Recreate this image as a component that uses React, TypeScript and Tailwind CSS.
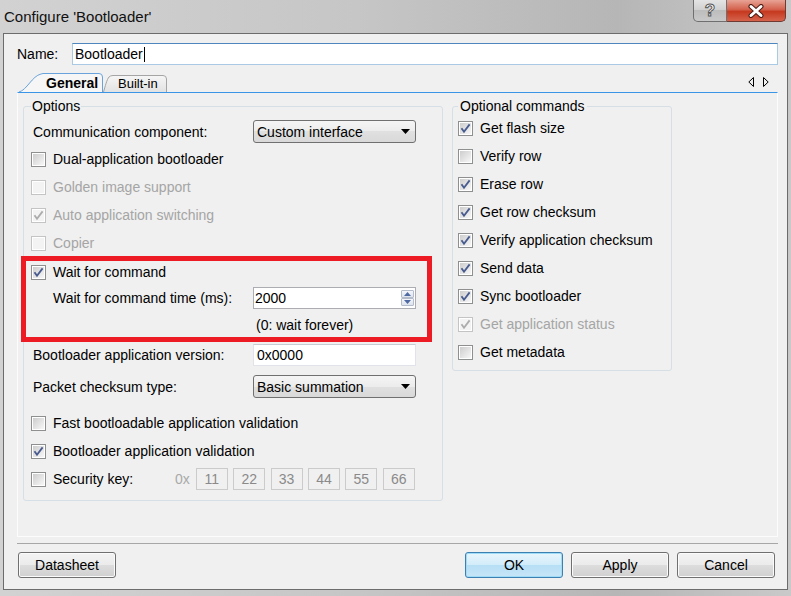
import React from "react";

function CheckBox({ checked = false, disabled = false }: { checked?: boolean; disabled?: boolean }) {
  return (
    <span
      className={`flex h-[15px] w-[15px] shrink-0 items-center justify-center border bg-white ${
        disabled ? "border-[#c4c4c4]" : "border-[#8e8f8f]"
      }`}
    >
      <span
        className={`flex h-[11px] w-[11px] items-center justify-center ${
          disabled ? "bg-[#f3f3f3]" : "bg-[linear-gradient(135deg,#cdcdcd,#f7f7f7)]"
        }`}
      >
        {checked && (
          <svg width="11" height="11" viewBox="0 0 11 11">
            <path
              d="M1.5 5.2 L4 8.8 L9.6 1.4"
              fill="none"
              stroke={disabled ? "#acacac" : "#485b8f"}
              strokeWidth="1.8"
            />
          </svg>
        )}
      </span>
    </span>
  );
}

function CheckRow({ label, checked, disabled }: { label: string; checked?: boolean; disabled?: boolean }) {
  return (
    <div className="flex h-[28px] items-center gap-[7px]">
      <CheckBox checked={checked} disabled={disabled} />
      <span className={disabled ? "text-[#a5a5a5]" : "text-black"}>{label}</span>
    </div>
  );
}

function Combo({ value }: { value: string }) {
  return (
    <div className="flex h-[23px] w-[163px] items-center justify-between rounded-[3px] border border-[#707070] bg-[linear-gradient(180deg,#f5f5f5,#ececec_50%,#e0e0e0_50%,#d9d9d9)] pl-[3px] pr-[5px]">
      <span>{value}</span>
      <svg width="9" height="5" viewBox="0 0 9 5">
        <path d="M0 0H9L4.5 5Z" fill="#000" />
      </svg>
    </div>
  );
}

function SpinBtn({ up }: { up?: boolean }) {
  return (
    <div className="flex h-[8px] w-[13px] items-center justify-center rounded-[1px] border border-[#b4bccb] bg-[linear-gradient(180deg,#f4f6fa,#dde3ee)]">
      <svg width="7" height="4" viewBox="0 0 7 4">
        <path d={up ? "M0 4H7L3.5 0Z" : "M0 0H7L3.5 4Z"} fill="#4f6aa3" />
      </svg>
    </div>
  );
}

function Btn({ label, primary }: { label: string; primary?: boolean }) {
  return (
    <div
      className={`flex h-[26px] w-[98px] items-center justify-center rounded-[3px] border ${
        primary
          ? "border-[#3c7fb1] bg-[linear-gradient(180deg,#e8f5fc,#d2ecfa_50%,#b5def5_50%,#c7e6f7)] shadow-[inset_0_0_0_1px_#9fdcf8]"
          : "border-[#707070] bg-[linear-gradient(180deg,#f3f3f3,#ebebeb_50%,#dddddd_50%,#d0d0d0)] shadow-[inset_0_0_0_1px_#fbfbfb]"
      }`}
    >
      {label}
    </div>
  );
}

const commands: { label: string; checked?: boolean; disabled?: boolean }[] = [
  { label: "Get flash size", checked: true },
  { label: "Verify row" },
  { label: "Erase row", checked: true },
  { label: "Get row checksum", checked: true },
  { label: "Verify application checksum", checked: true },
  { label: "Send data", checked: true },
  { label: "Sync bootloader", checked: true },
  { label: "Get application status", checked: true, disabled: true },
  { label: "Get metadata" },
];

export default function App() {
  return (
    <div className="h-[596px] w-[791px] overflow-hidden bg-[linear-gradient(90deg,#d2d2d2,#c6c6c6_45%,#b6b6b6_78%,#c9c9c9)] font-['Liberation_Sans',Arial,sans-serif] text-[14px] leading-[16px] text-black">
      {/* title bar */}
      <div className="flex h-[33px] items-start justify-between pl-[4px] pr-[5px]">
        <span className="self-center text-[15px] text-[#111]">Configure 'Bootloader'</span>
        <div className="flex">
          <div className="flex h-[22px] w-[34px] items-center justify-center rounded-bl-[5px] border border-t-0 border-[#6f6f6f] bg-[linear-gradient(180deg,#e4e4e4,#cfcfcf_50%,#bdbdbd_50%,#c9c9c9)]">
            <span className="text-[17px] font-bold leading-none text-white [-webkit-text-stroke:1px_#555]">?</span>
          </div>
          <div className="flex h-[22px] w-[59px] items-center justify-center rounded-br-[5px] border border-l-0 border-t-0 border-[#6f3a32] bg-[linear-gradient(180deg,#e7a395,#d4614d_45%,#c5391f_55%,#d6634c)]">
            <svg width="20" height="14" viewBox="0 0 20 14">
              <path d="M5 2.5 L15 11.5 M15 2.5 L5 11.5" stroke="#4a1c14" strokeWidth="5" strokeLinecap="round" />
              <path d="M5 2.5 L15 11.5 M15 2.5 L5 11.5" stroke="#fff" strokeWidth="3" strokeLinecap="round" />
            </svg>
          </div>
        </div>
      </div>

      {/* client area */}
      <div className="mx-[3px] flex h-[557px] flex-col border border-[#6c6c6c] bg-[#f0f0f0]">
        {/* name */}
        <div className="mt-[9px] flex h-[22px] items-center pl-[13px]">
          <span className="w-[55px]">Name:</span>
          <div className="flex h-[22px] w-[706px] items-center border border-[#a9c9e4] border-t-[#4f86bd] bg-white pl-[2px]">
            <span>Bootloader</span>
            <span className="ml-[1px] h-[15px] w-[1px] bg-black" />
          </div>
        </div>

        {/* tabs */}
        <div className="ml-[13px] mt-[8px] flex h-[19px] w-[761px] items-end">
          <div className="relative z-10 flex h-[19px] w-[87px] items-center pl-[29px] font-bold">
            <svg className="absolute inset-0" width="87" height="19" viewBox="0 0 87 19">
              <path
                d="M2 19 C10 17 15 3 24 1 L26 0.5 H82 Q85.5 0.5 85.5 4 V19"
                fill="#f6f6f6"
                stroke="#6aa3dc"
                strokeWidth="1"
              />
            </svg>
            <span className="relative">General</span>
          </div>
          <div className="relative -ml-[1px] flex h-[17px] w-[64px] items-center pl-[15px] text-[13px]">
            <svg className="absolute inset-0" width="64" height="17" viewBox="0 0 64 17">
              <defs>
                <linearGradient id="tabg" x1="0" y1="0" x2="0" y2="1">
                  <stop offset="0" stopColor="#f6f6f6" />
                  <stop offset="1" stopColor="#e2e2e2" />
                </linearGradient>
              </defs>
              <path
                d="M0.5 17 C2 12 4 4 6 2 Q7.5 0.5 10 0.5 H60 Q63.5 0.5 63.5 4 V17"
                fill="url(#tabg)"
                stroke="#a5a5a5"
                strokeWidth="1"
              />
            </svg>
            <span className="relative">Built-in</span>
          </div>
          <svg className="mb-[5px] ml-auto mr-[9px]" width="21" height="10" viewBox="0 0 21 10">
            <path d="M5.5 0.5 L0.8 5 L5.5 9.5 Z" fill="none" stroke="#000" strokeWidth="1" />
            <path d="M15.5 0.5 L20.2 5 L15.5 9.5 Z" fill="none" stroke="#000" strokeWidth="1" />
          </svg>
        </div>

        {/* tab panel */}
        <div className="ml-[13px] flex h-[445px] w-[761px] items-start gap-[9px] border border-t-[#3b95e6] border-x-[#fcfcfc] border-b-[#fcfcfc] pl-[5px] pt-[5px]">
          {/* Options */}
          <fieldset className="w-[420px] rounded-[3px] border border-[#d5dfe5] pb-[7px] pl-[7px]">
            <legend className="px-[1px] leading-[16px]">Options</legend>

            <div className="mt-[6px] flex h-[23px] items-center">
              <span className="w-[222px] pl-[2px]">Communication component:</span>
              <Combo value="Custom interface" />
            </div>

            <div className="mt-[2px]">
              <CheckRow label="Dual-application bootloader" />
              <CheckRow label="Golden image support" disabled />
              <CheckRow label="Auto application switching" checked disabled />
              <CheckRow label="Copier" disabled />
            </div>

            <div className="-ml-[10px] -mt-[1px] h-[86px] w-[411px] border-[5px] border-[#ed1c24] pl-[5px]">
              <div className="flex h-[22px] items-center gap-[7px]">
                <CheckBox checked />
                <span>Wait for command</span>
              </div>
              <div className="mt-[4px] flex h-[22px] items-center">
                <span className="w-[222px] pl-[22px]">Wait for command time (ms):</span>
                <div className="flex h-[22px] w-[163px] items-center justify-between border border-[#abadb3] bg-white pl-[1px] pr-[1px]">
                  <span>2000</span>
                  <div className="flex flex-col">
                    <SpinBtn up />
                    <SpinBtn />
                  </div>
                </div>
              </div>
              <div className="mt-[5px] flex h-[22px] items-center pl-[225px]">(0: wait forever)</div>
            </div>

            <div className="mt-[2px] flex h-[22px] items-center">
              <span className="w-[222px] pl-[2px]">Bootloader application version:</span>
              <div className="flex h-[22px] w-[163px] items-center border border-[#e2e3ea] border-t-[#c9cbd2] bg-white pl-[3px]">
                0x0000
              </div>
            </div>

            <div className="mt-[9px] flex h-[23px] items-center">
              <span className="w-[222px] pl-[2px]">Packet checksum type:</span>
              <Combo value="Basic summation" />
            </div>

            <div className="mt-[11px]">
              <CheckRow label="Fast bootloadable application validation" />
              <CheckRow label="Bootloader application validation" checked />
              <div className="flex h-[28px] items-center">
                <CheckBox />
                <span className="ml-[7px] w-[122px]">Security key:</span>
                <span className="text-[#a9a9a9]">0x</span>
                <div className="ml-[6px] flex gap-[5.4px]">
                  {["11", "22", "33", "44", "55", "66"].map((k) => (
                    <div
                      key={k}
                      className="flex h-[22px] w-[32px] items-center justify-center border border-[#cbcbcb] text-[#8a8a8a]"
                    >
                      {k}
                    </div>
                  ))}
                </div>
              </div>
            </div>
          </fieldset>

          {/* Optional commands */}
          <fieldset className="w-[220px] rounded-[3px] border border-[#d5dfe5] pb-[4px] pl-[5px]">
            <legend className="px-[2px] leading-[16px]">Optional commands</legend>
            {commands.map((c) => (
              <CheckRow key={c.label} label={c.label} checked={c.checked} disabled={c.disabled} />
            ))}
          </fieldset>
        </div>

        {/* separator */}
        <div className="ml-[13px] mt-[6px] w-[761px] border-t border-[#a7a7a7]" />

        {/* buttons */}
        <div className="mt-[8px] flex items-center pl-[14px] pr-[12px]">
          <Btn label="Datasheet" />
          <div className="ml-auto flex gap-[8px]">
            <Btn label="OK" primary />
            <Btn label="Apply" />
            <Btn label="Cancel" />
          </div>
        </div>
      </div>
    </div>
  );
}
